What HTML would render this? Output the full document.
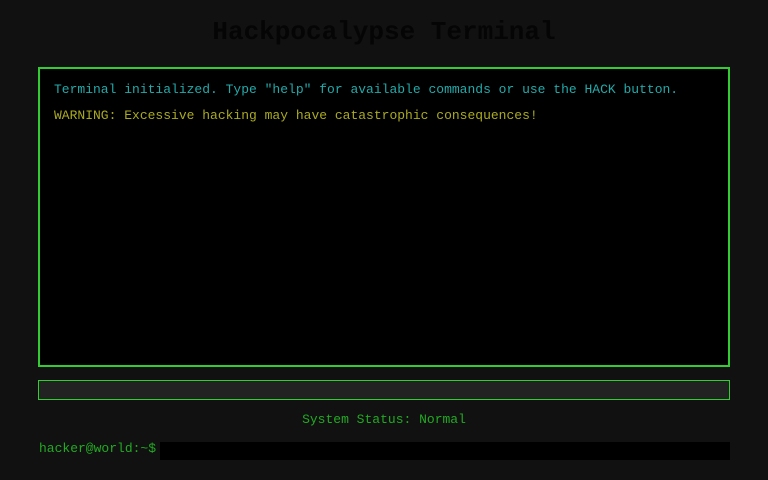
<!DOCTYPE html>
<html><head><meta charset="utf-8"><style>
*{margin:0;padding:0;box-sizing:border-box}
body{width:768px;height:480px;background:#111;font-family:"Liberation Mono",monospace;position:relative;overflow:hidden}
h1{position:absolute;left:0;right:0;top:16px;text-align:center;font-size:26px;font-weight:bold;color:#050505;line-height:32px}
.term{position:absolute;left:38px;top:67px;width:692px;height:300px;background:#000;border:2px solid #33cc33}
.l{position:absolute;left:14px;font-size:13px;line-height:16px;white-space:pre}
.bar{position:absolute;left:38px;top:380px;width:692px;height:20px;background:#222;border:1px solid #33cc33}
.st{position:absolute;left:0;right:0;top:412px;text-align:center;font-size:13px;color:#22aa22;line-height:16px}
.pr{position:absolute;left:39px;top:441px;font-size:13px;color:#22aa22;line-height:16px}
.in{position:absolute;left:160px;top:442px;width:570px;height:18px;background:#000}
</style></head><body>
<h1>Hackpocalypse Terminal</h1>
<div class="term">
<div class="l" style="top:13px;color:#22aaaa">Terminal initialized. Type "help" for available commands or use the HACK button.</div>
<div class="l" style="top:39px;color:#aaaa22">WARNING: Excessive hacking may have catastrophic consequences!</div>
</div>
<div class="bar"></div>
<div class="st">System Status: Normal</div>
<div class="pr">hacker@world:~$</div>
<div class="in"></div>
</body></html>
